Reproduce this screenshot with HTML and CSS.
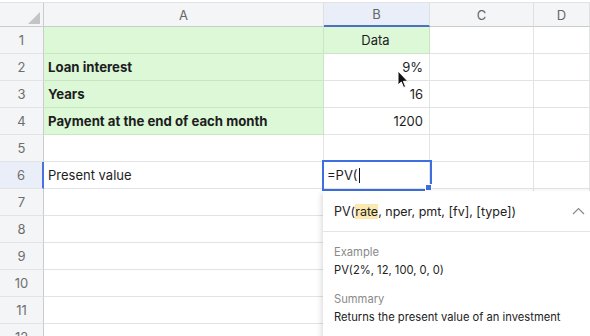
FILE: index.html
```html
<!DOCTYPE html>
<html lang="en">

<head>
    <meta charset="UTF-8">
    <meta name="viewport" content="width=device-width, initial-scale=1.0">
    <title>PV</title>
    <link rel="stylesheet" href="styles.css">
</head>

<body>
    <div class="wrap">
        <div class="sheet">
            <!-- 列头 -->
            <div class="hd corner"><span class="tri"></span></div>
            <div class="hd">A</div>
            <div class="hd hd_on">B</div>
            <div class="hd">C</div>
            <div class="hd">D</div>

            <div class="rh">1</div>
            <div class="cell green"></div>
            <div class="cell green mid">Data</div>
            <div class="cell"></div>
            <div class="cell"></div>

            <div class="rh">2</div>
            <div class="cell green bold">Loan interest</div>
            <div class="cell num">9%</div>
            <div class="cell"></div>
            <div class="cell"></div>

            <div class="rh">3</div>
            <div class="cell green bold">Years</div>
            <div class="cell num">16</div>
            <div class="cell"></div>
            <div class="cell"></div>

            <div class="rh">4</div>
            <div class="cell green bold">Payment at the end of each month</div>
            <div class="cell num">1200</div>
            <div class="cell"></div>
            <div class="cell"></div>

            <div class="rh">5</div>
            <div class="cell"></div>
            <div class="cell"></div>
            <div class="cell"></div>
            <div class="cell"></div>

            <div class="rh rh_on">6</div>
            <div class="cell">Present value</div>
            <div class="cell editing">=PV(<span class="caret"></span></div>
            <div class="cell"></div>
            <div class="cell"></div>

            <div class="rh">7</div>
            <div class="cell"></div>
            <div class="cell"></div>
            <div class="cell"></div>
            <div class="cell"></div>

            <div class="rh">8</div>
            <div class="cell"></div>
            <div class="cell"></div>
            <div class="cell"></div>
            <div class="cell"></div>

            <div class="rh">9</div>
            <div class="cell"></div>
            <div class="cell"></div>
            <div class="cell"></div>
            <div class="cell"></div>

            <div class="rh">10</div>
            <div class="cell"></div>
            <div class="cell"></div>
            <div class="cell"></div>
            <div class="cell"></div>

            <div class="rh">11</div>
            <div class="cell"></div>
            <div class="cell"></div>
            <div class="cell"></div>
            <div class="cell"></div>

            <div class="rh">12</div>
            <div class="cell"></div>
            <div class="cell"></div>
            <div class="cell"></div>
            <div class="cell"></div>
        </div>

        <!-- 函数提示框 -->
        <div class="tip">
            <div class="tip_head">
                <span>PV(<em>rate</em>, nper, pmt, [fv], [type])</span>
                <svg width="13" height="8" viewBox="0 0 13 8">
                    <path d="M1 7 L6.5 1.5 L12 7" fill="none" stroke="#8a8a8a" stroke-width="1.2" />
                </svg>
            </div>
            <div class="tip_body">
                <p class="label">Example</p>
                <p>PV(2%, 12, 100, 0, 0)</p>
                <p class="label gap">Summary</p>
                <p>Returns the present value of an investment</p>
            </div>
        </div>

        <!-- 鼠标指针 -->
        <svg class="pointer" width="12" height="19" viewBox="0 0 12 19">
            <path d="M1 1 L1 15 L4.3 12 L6.6 17.5 L8.6 16.6 L6.4 11.3 L10.8 11.3 Z" fill="#111" stroke="#fff" stroke-width="1" />
        </svg>
    </div>
</body>

</html>
```

FILE: styles.css
```css
* {
    margin: 0;
    padding: 0;
    box-sizing: border-box;
}

body {
    background: #fff;
    font-family: Inter, "Liberation Sans", sans-serif;
    font-size: 13px;
    color: #1d1d1f;
}

.wrap {
    width: 590px;
    height: 336px;
    overflow: hidden;
    position: relative;
}

.sheet {
    margin-top: 2px;
    border-top: 1px solid #e2e3e5;
    display: grid;
    grid-template-columns: 44px 280px 106px 104px 56px;
    grid-auto-rows: 27px;
    grid-template-rows: 24px;
}

.hd {
    background: #f4f5f7;
    border-right: 1px solid #dfe0e2;
    border-bottom: 1px solid #c9cbce;
    color: #666;
    display: flex;
    align-items: center;
    justify-content: center;
}

.hd_on {
    background: #e9eef8;
    border-bottom: 2px solid #4a72c2;
}

.corner {
    justify-content: flex-end;
    align-items: flex-end;
    padding: 0 3px 2px 0;
    border-right: 1px solid #c9cbce;
}

.tri {
    width: 12px;
    height: 12px;
    background: #c3c4c6;
    clip-path: polygon(100% 0, 100% 100%, 0 100%);
}

.rh {
    background: #f4f5f7;
    border-right: 1px solid #c9cbce;
    border-bottom: 1px solid #e2e3e5;
    color: #6e6e6e;
    display: flex;
    align-items: center;
    justify-content: center;
}

.rh_on {
    background: #e9eef8;
    border-right: 2px solid #4a72e0;
}

.cell {
    border-right: 1px solid #e2e3e5;
    border-bottom: 1px solid #e2e3e5;
    padding: 0 6px 0 4px;
    display: flex;
    align-items: center;
    white-space: nowrap;
}

.green {
    background: #dcf8d6;
    border-color: #c9e6c3;
}

.bold {
    font-weight: 700;
    font-size: 13.2px;
}

.mid {
    justify-content: center;
}

.num {
    justify-content: flex-end;
}

.editing {
    position: relative;
    z-index: 2;
    outline: 2px solid #3d6fe0;
    padding-left: 3px;
}

.editing::after {
    content: "";
    position: absolute;
    right: -3px;
    bottom: -3px;
    width: 5px;
    height: 5px;
    background: #3d6fe0;
    border: 1px solid #fff;
}

.caret {
    width: 1px;
    height: 15px;
    background: #111;
    margin-left: 1px;
}

.tip {
    position: absolute;
    left: 323px;
    top: 191px;
    width: 280px;
    height: 160px;
    background: #fff;
    box-shadow: -1px 2px 6px rgba(0, 0, 0, 0.16);
    z-index: 3;
}

.tip_head {
    height: 41px;
    border-bottom: 1px solid #e4e5e7;
    display: flex;
    align-items: center;
    justify-content: space-between;
    padding: 0 18px 0 11px;
    font-size: 12.5px;
    color: #222;
}

.tip_head em {
    font-style: normal;
    background: #fbe9b0;
}

.tip_body {
    margin-left: 11px;
    padding: 11px 0 10px;
    border-bottom: 1px solid #e4e5e7;
    font-size: 11.2px;
    line-height: 18px;
    color: #222;
}

.tip_body .label {
    color: #8a8a8a;
}

.tip_body .gap {
    margin-top: 11px;
}

.pointer {
    position: absolute;
    left: 397px;
    top: 70px;
    z-index: 4;
}
```
